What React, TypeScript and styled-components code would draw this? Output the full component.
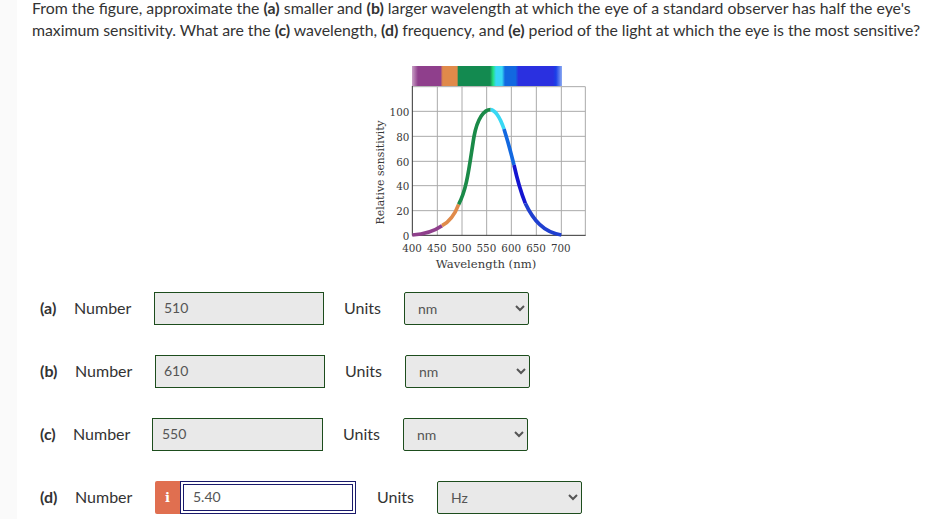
import React from "react";
import styled, { createGlobalStyle } from "styled-components";

const GlobalStyle = createGlobalStyle`
	html, body {
		margin: 0;
		padding: 0;
		background: #fff;
		overflow: hidden;
	}
`;

const Page = styled.div`
	box-sizing: border-box;
	width: 947px;
	height: 519px;
	overflow: hidden;
	border-left: 17px solid #fafafa;
	font-family: Lato, "Open Sans", sans-serif;
	color: #333;
`;

const Question = styled.div`
	margin-left: 15px;
	display: flex;
	flex-direction: column;
	gap: 6px;
`;

const QuestionLine = styled.div<{ $spacing: number }>`
	font-size: 15.85px;
	line-height: 16px;
	white-space: nowrap;
	letter-spacing: ${(p) => p.$spacing}px;
`;

const FigureWrap = styled.div`
	margin: 17px 0 0 343px;
	width: 240px;
	height: 225px;
`;

const Rows = styled.div`
	margin: 12px 0 0 23px;
	display: flex;
	flex-direction: column;
	gap: 30px;
`;

const Row = styled.div`
	display: flex;
	align-items: center;
	height: 33px;
	font-size: 16px;
`;

const Tag = styled.b<{ $width: number }>`
	width: ${(p) => p.$width}px;
	margin-bottom: 2px;
	font-weight: 700;
`;

const NumberLabel = styled.span<{ $width: number }>`
	width: ${(p) => p.$width}px;
	margin-bottom: 2px;
`;

const UnitsLabel = styled.span<{ $left: number; $width: number }>`
	margin: 0 0 2px ${(p) => p.$left}px;
	width: ${(p) => p.$width}px;
`;

const AnswerInput = styled.input<{ $width: number; $pad?: number }>`
	box-sizing: border-box;
	width: ${(p) => p.$width}px;
	height: 33px;
	padding: 0 0 2px ${(p) => p.$pad ?? 9}px;
	border: 1px solid #1d4d1d;
	background: #e9e9e9;
	color: #555;
	font: 14px Lato, sans-serif;
	outline: none;
`;

const FocusedInput = styled(AnswerInput)`
	border: 4px double #1a1a6b;
	background: #fff;
`;

const InfoBadge = styled.span`
	display: flex;
	align-items: center;
	justify-content: center;
	width: 25px;
	height: 33px;
	background: #e06f50;
	border-radius: 2px 0 0 2px;
	color: #fff;
	font: 700 13px "DejaVu Serif", serif;
`;

const UnitSelect = styled.select<{ $width: number }>`
	box-sizing: border-box;
	width: ${(p) => p.$width}px;
	height: 33px;
	padding: 0 0 0 9px;
	border: 1px solid #1d4d1d;
	border-radius: 2px;
	background-color: #e9e9e9;
	color: #555;
	font: 14px Lato, sans-serif;
	outline: none;
`;

const AxisText = styled.text<{ $size: number }>`
	font-family: "DejaVu Serif", "Liberation Serif", serif;
	font-size: ${(p) => p.$size}px;
	fill: #3a3a3a;
`;

const gridX = [232, 306, 380, 454, 529, 604, 676];
const gridY = [95, 169, 244, 319, 392, 467];
const tickY = [
	{ label: "100", y: 182 },
	{ label: "80", y: 257 },
	{ label: "60", y: 332 },
	{ label: "40", y: 406 },
	{ label: "20", y: 480 },
	{ label: "0", y: 554 },
];
const tickX = [400, 450, 500, 550, 600, 650, 700];

// stops are measured along the strip, x from 156 to 606 in the drawing
const spectrum = [
	{ at: 0, c: "#c9a0c6" },
	{ at: 4, c: "#8f3f8c" },
	{ at: 19, c: "#8f3f8c" },
	{ at: 20.5, c: "#e08a4a" },
	{ at: 30, c: "#e08a4a" },
	{ at: 31, c: "#138a50" },
	{ at: 52, c: "#138a50" },
	{ at: 54, c: "#22e07a" },
	{ at: 56, c: "#38d8f4" },
	{ at: 60, c: "#38d8f4" },
	{ at: 62, c: "#1268e0" },
	{ at: 69, c: "#1268e0" },
	{ at: 71, c: "#2a30e0" },
	{ at: 94, c: "#2a30e0" },
	{ at: 96, c: "#1a40e8" },
	{ at: 100, c: "#8caaf2" },
];

const segments = [
	{ c: "#8f3f8c", d: "M157 540 C185 538 220 530 246 512" },
	{ c: "#e08a4a", d: "M246 512 C265 502 282 485 296 448" },
	{ c: "#1a8a48", d: "M296 448 C322 400 328 330 342 245 C352 190 372 164 392 164" },
	{ c: "#38d8f4", d: "M392 164 C408 166 420 188 432 222" },
	{ c: "#1268e0", d: "M432 222 C444 260 452 290 462 330" },
	{ c: "#1414d0", d: "M462 330 C472 375 482 410 496 445" },
	{ c: "#1f3fd0", d: "M496 445 C520 495 550 532 604 540" },
];

const SensitivityChart = () => (
	<svg width="240" height="225" viewBox="0 0 720 675">
		<defs>
			<linearGradient id="strip">
				{spectrum.map((s) => (
					<stop key={s.at} offset={`${s.at}%`} stopColor={s.c} />
				))}
			</linearGradient>
		</defs>
		<rect x={156} y={33} width={450} height={60} fill="url(#strip)" />
		{gridX.map((x) => (
			<line key={x} x1={x} x2={x} y1={95} y2={541} stroke="#aaa" strokeWidth="3" />
		))}
		{gridY.map((y) => (
			<line key={y} x1={157} x2={676} y1={y} y2={y} stroke="#aaa" strokeWidth="3" />
		))}
		<path d="M157 93 V541 H677" fill="none" stroke="#333" strokeWidth="3" />
		{segments.map((s) => (
			<path key={s.c} d={s.d} fill="none" stroke={s.c} strokeWidth="11" />
		))}
		{tickY.map((t) => (
			<AxisText key={t.label} $size={31} x={148} y={t.y} textAnchor="end">
				{t.label}
			</AxisText>
		))}
		{tickX.map((t, i) => (
			<AxisText key={t} $size={31} x={157 + i * 74.4 - 1} y={592} textAnchor="middle">
				{t}
			</AxisText>
		))}
		<AxisText $size={35} x={378} y={638} textAnchor="middle">
			Wavelength (nm)
		</AxisText>
		<AxisText $size={32.5} x={0} y={0} textAnchor="middle" transform="translate(72 352) rotate(-90)">
			Relative sensitivity
		</AxisText>
	</svg>
);

export default function App() {
	return (
		<Page>
			<GlobalStyle />
			<Question>
				<QuestionLine $spacing={0}>
					From the figure, approximate the <b>(a)</b> smaller and <b>(b)</b> larger wavelength at which
					the eye of a standard observer has half the eye's
				</QuestionLine>
				<QuestionLine $spacing={-0.04}>
					maximum sensitivity. What are the <b>(c)</b> wavelength, <b>(d)</b> frequency, and <b>(e)</b>{" "}
					period of the light at which the eye is the most sensitive?
				</QuestionLine>
			</Question>
			<FigureWrap>
				<SensitivityChart />
			</FigureWrap>
			<Rows>
				<Row>
					<Tag $width={34}>(a)</Tag>
					<NumberLabel $width={80}>Number</NumberLabel>
					<AnswerInput $width={170} defaultValue="510" />
					<UnitsLabel $left={20} $width={60}>Units</UnitsLabel>
					<UnitSelect $width={125} defaultValue="nm">
						<option>nm</option>
					</UnitSelect>
				</Row>
				<Row>
					<Tag $width={35}>(b)</Tag>
					<NumberLabel $width={80}>Number</NumberLabel>
					<AnswerInput $width={170} $pad={8} defaultValue="610" />
					<UnitsLabel $left={20} $width={60}>Units</UnitsLabel>
					<UnitSelect $width={125} defaultValue="nm">
						<option>nm</option>
					</UnitSelect>
				</Row>
				<Row>
					<Tag $width={33}>(c)</Tag>
					<NumberLabel $width={79}>Number</NumberLabel>
					<AnswerInput $width={171} defaultValue="550" />
					<UnitsLabel $left={20} $width={60}>Units</UnitsLabel>
					<UnitSelect $width={125} defaultValue="nm">
						<option>nm</option>
					</UnitSelect>
				</Row>
				<Row>
					<Tag $width={35}>(d)</Tag>
					<NumberLabel $width={80}>Number</NumberLabel>
					<InfoBadge>i</InfoBadge>
					<FocusedInput $width={176} $pad={9} defaultValue="5.40" />
					<UnitsLabel $left={21} $width={60}>Units</UnitsLabel>
					<UnitSelect $width={145} defaultValue="Hz">
						<option>Hz</option>
					</UnitSelect>
				</Row>
			</Rows>
		</Page>
	);
}
